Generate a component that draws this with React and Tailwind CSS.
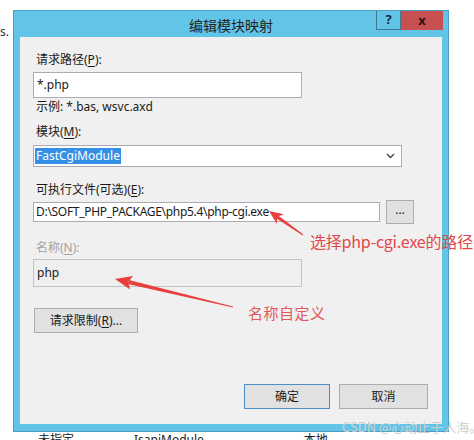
import React from "react";

const ui = { fontFamily: '"Noto Sans", "Noto Sans CJK SC", sans-serif' };
const cjk = { fontFamily: '"Noto Sans CJK SC", "Noto Sans", sans-serif' };

function Label({ children, className = "" }) {
  return (
    <div className={`text-[12px] leading-[16px] text-[#1a1a1a] ${className}`} style={ui}>
      {children}
    </div>
  );
}

function U({ children }) {
  return <span className="underline underline-offset-2">{children}</span>;
}

function Btn({ children, className = "" }) {
  return (
    <div
      className={`flex items-center justify-center bg-[#e1e1e1] border border-[#adadad] text-[12px] text-[#1a1a1a] ${className}`}
      style={ui}
    >
      {children}
    </div>
  );
}

export default function App() {
  return (
    <div className="relative w-[474px] h-[440px] overflow-hidden bg-white" style={ui}>
      <div className="pl-[13px] pt-[10px]">
        {/* dialog window */}
        <div className="w-[436px] bg-[#62c5e7] border border-[#4d9fc2] flex flex-col">
          {/* title bar */}
          <div className="relative h-[26px] flex items-center justify-center">
            <span className="text-[14px] text-[#222] leading-none mt-[2px]" style={cjk}>
              编辑模块映射
            </span>
            <div className="absolute right-[5px] top-0 flex">
              <div className="w-[25px] h-[19px] border border-t-0 border-[#3c7a93] flex items-center justify-center text-[13px] font-bold text-[#1b2a3a]" style={ui}>
                ?
              </div>
              <div className="w-[42px] h-[19px] bg-[#c75050] flex items-center justify-center text-[13px] font-bold text-[#2a1414]" style={ui}>
                x
              </div>
            </div>
          </div>
          {/* content */}
          <div className="mx-[6px] mb-[7px] bg-[#f0f0f0] flex flex-col px-[13px] pb-[15px]">
            <Label className="mt-[15px] pl-[3px]">
              请求路径(<U>P</U>):
            </Label>
            <div className="mt-[4px] w-[269px] h-[26px] bg-white border border-[#abadb3] flex items-center px-[3px] text-[12px] text-[#1a1a1a]">
              *.php
            </div>
            <Label className="mt-[1px] pl-[3px]">示例: *.bas, wsvc.axd</Label>
            <Label className="mt-[9px] pl-[3px]">
              模块(<U>M</U>):
            </Label>
            <div className="mt-[5px] w-[369px] h-[22px] bg-white border border-[#abadb3] flex items-center justify-between pl-[1px] pr-[6px]">
              <span className="bg-[#3390e6] text-white text-[12px] leading-[16px] px-[1px]">FastCgiModule</span>
              <svg width="9" height="6" viewBox="0 0 9 6">
                <polyline points="1,1 4.5,4.5 8,1" fill="none" stroke="#444" strokeWidth="1.4" />
              </svg>
            </div>
            <Label className="mt-[15px] pl-[3px]">
              可执行文件(可选)(<U>E</U>):
            </Label>
            <div className="mt-[2px] flex items-center h-[24px]">
              <div className="w-[347px] h-[20px] bg-white border border-[#abadb3] flex items-center px-[2px] text-[12px] tracking-[-0.3px] text-[#1a1a1a] whitespace-nowrap overflow-hidden">
                D:\SOFT_PHP_PACKAGE\php5.4\php-cgi.exe
              </div>
              <Btn className="ml-[6px] w-[28px] h-[24px] leading-none pb-[4px]">...</Btn>
            </div>
            <Label className="mt-[16px] pl-[3px] !text-[#a3a3a3]">
              名称(<U>N</U>):
            </Label>
            <div className="mt-[3px] w-[269px] h-[28px] bg-[#efefef] border border-[#c3c3c3] flex items-center px-[3px] text-[12px] text-[#1a1a1a]">
              php
            </div>
            <Btn className="mt-[21px] ml-[1px] w-[104px] h-[25px]">
              请求限制(<U>R</U>)...
            </Btn>
            <div className="mt-[51px] flex justify-end gap-[9px] pr-[1px]">
              <Btn className="w-[86px] h-[25px] !border-[#4a8fc9]">确定</Btn>
              <Btn className="w-[89px] h-[25px]">取消</Btn>
            </div>
          </div>
        </div>
      </div>
      {/* background page row beneath */}
      <div className="flex text-[12px] text-[#222] leading-[16px]" style={ui}>
        <span className="ml-[38px]">未指定</span>
        <span className="ml-[60px]">IsapiModule</span>
        <span className="ml-[100px]">本地</span>
      </div>

      {/* background fragment left */}
      <div className="absolute left-0 top-[23px] text-[12px] text-[#333]">s.</div>

      {/* annotations overlay */}
      <svg className="absolute left-0 top-0" width="474" height="440" viewBox="0 0 474 440">
        <polygon points="269,211 276.9,224.0 277.2,216.8 283.9,214.2" fill="#e8403f" />
        <polygon points="276.2,218.3 278.2,215.4 303.3,234.5 302.7,235.5" fill="#e8403f" />
        <polygon points="115,279 130.1,289.6 128.2,281.9 133.0,276.0" fill="#e8403f" />
        <polygon points="127.8,283.9 128.9,279.9 233.1,306.5 232.9,307.5" fill="#e8403f" />
      </svg>
      <div className="absolute left-[310px] top-[231px] text-[16px] leading-[20px] tracking-[-0.2px] text-[#e2474a] whitespace-nowrap" style={cjk}>
        选择php-cgi.exe的路径
      </div>
      <div className="absolute left-[248px] top-[303px] text-[15px] leading-[20px] tracking-[0.5px] text-[#e2575a] whitespace-nowrap" style={cjk}>
        名称自定义
      </div>
      <div className="absolute left-[342px] top-[419px] text-[13px] leading-[16px] text-[#cfcfcf] whitespace-nowrap" style={cjk}>
        CSDN @心动止于人海。
      </div>
    </div>
  );
}
